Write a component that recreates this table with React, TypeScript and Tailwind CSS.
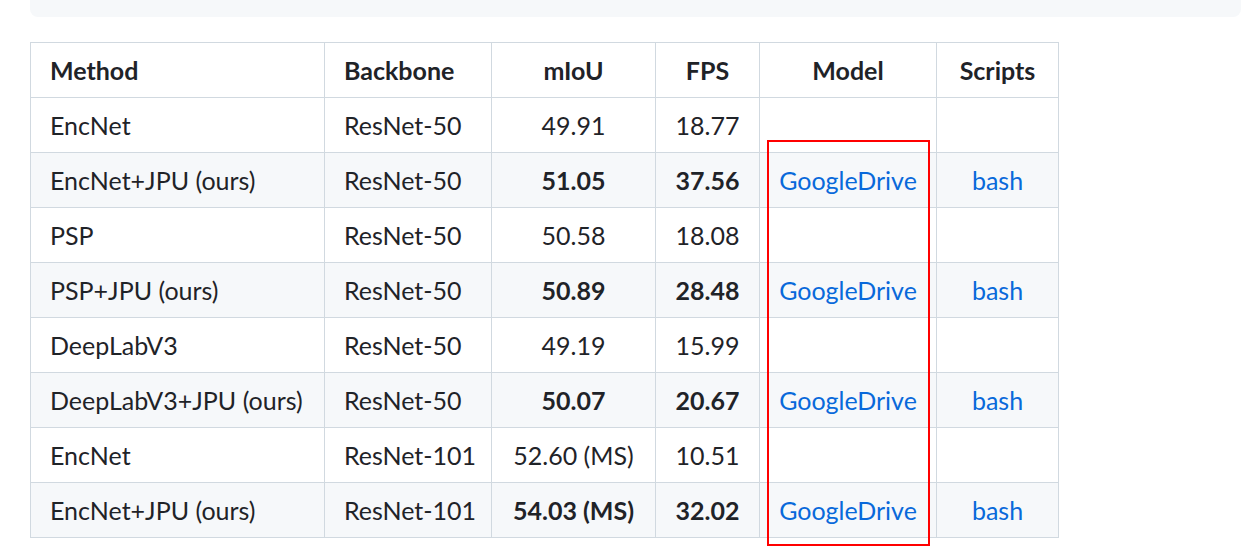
const rows = [
  { method: "EncNet", backbone: "ResNet-50", miou: "49.91", fps: "18.77", ours: false },
  { method: "EncNet+JPU (ours)", backbone: "ResNet-50", miou: "51.05", fps: "37.56", ours: true },
  { method: "PSP", backbone: "ResNet-50", miou: "50.58", fps: "18.08", ours: false },
  { method: "PSP+JPU (ours)", backbone: "ResNet-50", miou: "50.89", fps: "28.48", ours: true },
  { method: "DeepLabV3", backbone: "ResNet-50", miou: "49.19", fps: "15.99", ours: false },
  { method: "DeepLabV3+JPU (ours)", backbone: "ResNet-50", miou: "50.07", fps: "20.67", ours: true },
  { method: "EncNet", backbone: "ResNet-101", miou: "52.60 (MS)", fps: "10.51", ours: false },
  { method: "EncNet+JPU (ours)", backbone: "ResNet-101", miou: "54.03 (MS)", fps: "32.02", ours: true },
];

const cell = "whitespace-nowrap border border-[#d1d9e0] px-[19px] pt-[1px] pb-0 leading-none";

export default function App() {
  return (
    <div
      className="relative h-[557px] w-[1241px] overflow-hidden bg-white text-[#1f2328]"
      style={{ fontFamily: "Lato, 'Noto Sans', sans-serif" }}
    >
      <div className="ml-[30px] h-[17px] rounded-b-lg bg-[#f6f8fa]" />

      <table className="mt-[25px] ml-[30px] w-[1028px] table-fixed border-collapse text-[25px]">
        <colgroup>
          <col className="w-[294px]" />
          <col className="w-[167px]" />
          <col className="w-[164px]" />
          <col className="w-[104px]" />
          <col className="w-[177px]" />
          <col className="w-[122px]" />
        </colgroup>
        <thead>
          <tr className="h-[55px] font-bold">
            <th className={`${cell} text-left`}>Method</th>
            <th className={`${cell} text-left`}>Backbone</th>
            <th className={`${cell} text-center`}>mIoU</th>
            <th className={`${cell} text-center`}>FPS</th>
            <th className={`${cell} text-center`}>Model</th>
            <th className={`${cell} text-center`}>Scripts</th>
          </tr>
        </thead>
        <tbody>
          {rows.map((r, i) => (
            <tr key={i} className={`h-[55px] ${i % 2 === 1 ? "bg-[#f6f8fa]" : "bg-white"}`}>
              <td className={`${cell} text-left`}>{r.method}</td>
              <td className={`${cell} text-left`}>{r.backbone}</td>
              <td className={`${cell} text-center ${r.ours ? "font-bold" : ""}`}>{r.miou}</td>
              <td className={`${cell} text-center ${r.ours ? "font-bold" : ""}`}>{r.fps}</td>
              <td className={`${cell} text-center text-[#0969da]`}>{r.ours ? "GoogleDrive" : ""}</td>
              <td className={`${cell} text-center text-[#0969da]`}>{r.ours ? "bash" : ""}</td>
            </tr>
          ))}
        </tbody>
      </table>

      <div className="pointer-events-none absolute left-[767px] top-[140px] h-[406px] w-[163px] border-2 border-[#ff0000]" />
    </div>
  );
}
